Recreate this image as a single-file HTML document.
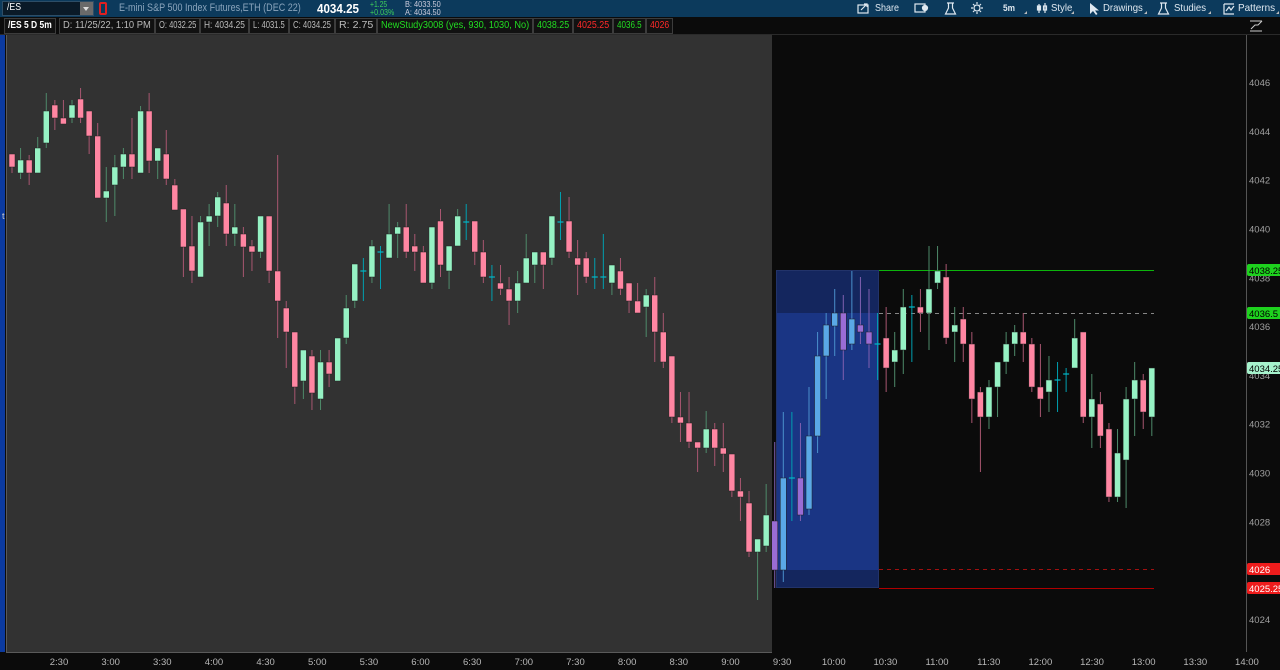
<!DOCTYPE html>
<html><head><meta charset="utf-8"><style>
*{margin:0;padding:0;box-sizing:border-box}
body{width:1280px;height:670px;overflow:hidden;background:#0b0b0b;font-family:"Liberation Sans",sans-serif;position:relative}
.top{position:absolute;left:0;top:0;width:1280px;height:17px;background:#0c3a5c;color:#dfe8f0;font-size:10px}
.t{position:absolute;white-space:nowrap;transform-origin:0 0}
.row2{position:absolute;left:0;top:17px;width:1280px;height:18px;background:#0b0b0b;border-bottom:1px solid #2a2a2a}
.seg{position:absolute;top:1px;height:16px;border:1px solid #3c3c3c;background:#111;overflow:hidden}
svg{position:absolute;left:0;top:0}
</style></head><body>
<div class="top" id="topbar">
 <div style="position:absolute;left:2px;top:1px;width:92px;height:15px;background:#0a1a28;border:1px solid #2d4d66"></div>
 <div style="position:absolute;left:80px;top:2px;width:13px;height:13px;background:#6a6a6a"></div>
 <div style="position:absolute;left:83px;top:7px;border-left:3.5px solid transparent;border-right:3.5px solid transparent;border-top:4px solid #ddd"></div>
 <div style="position:absolute;left:99px;top:2px;width:8px;height:13px;border:2px solid #e02020;border-radius:2px"></div>
</div>
<svg width="1280" height="17" style="top:0">
 <g stroke="#dfe8f0" fill="none" stroke-width="1.2">
  <rect x="858" y="5" width="10" height="8"/><path d="M861 10 L867 4 M864 4 H867 V7"/>
  <rect x="915" y="4" width="10" height="8"/><circle cx="925" cy="8" r="2.5" fill="#dfe8f0"/>
  <path d="M947 3 H954 M948.5 3 V8 L945.5 14 H955.5 L952.5 8 V3"/>
  <circle cx="977" cy="8" r="3"/><path d="M977 2 V4 M977 12 V14 M971 8 H973 M981 8 H983 M973 4 L974.5 5.5 M981 4 L979.5 5.5 M973 12 L974.5 10.5 M981 12 L979.5 10.5"/>
  <path d="M1039 4 V13 M1045 3 V13"/><rect x="1037.5" y="6" width="3" height="4" fill="#dfe8f0"/><rect x="1043.5" y="6" width="3" height="4"/>
  <path d="M1160 3 H1167 M1161.5 3 V8 L1158.5 14 H1168.5 L1165.5 8 V3"/>
  <path d="M1224 4 H1234 M1224 4 V14 H1234 M1226 11 L1229 7 L1231 10 L1234 6"/>
 </g>
 <path d="M1090 3 L1090 14 L1093 11 L1096 15 L1097.5 14 L1095 10.5 L1099 10.5 Z" fill="#dfe8f0"/>
 <g fill="#bbb"><path d="M1024 14 l3 0 0 -3z M1071 14 l3 0 0 -3z M1144 14 l3 0 0 -3z M1208 14 l3 0 0 -3z M1276 14 l3 0 0 -3z"/></g>
</svg>
<div class="row2" id="r2"></div>
<svg id="ch" width="1280" height="670"></svg>
<script>
(function(){
function fit(parent,txt,x,y,w,css){var d=document.createElement('div');d.className='t';d.textContent=txt;d.style.cssText+=css;d.style.left=x+'px';d.style.top=y+'px';parent.appendChild(d);var sw=d.scrollWidth;if(sw>0)d.style.transform='scaleX('+(w/sw)+')';return d;}
var tb=document.getElementById('topbar');
fit(tb,'/ES',7,2,14,'color:#fff;font-size:10px');
fit(tb,'E-mini S&P 500 Index Futures,ETH (DEC 22)',119,2,182,'color:#8aa4bc;font-size:11px');
fit(tb,'4034.25',317,1,42,'color:#fff;font-weight:bold;font-size:13px');
fit(tb,'+1.25',370,0,17,'color:#3ecf5a;font-size:8px');
fit(tb,'+0.03%',370,8,24,'color:#3ecf5a;font-size:8px');
fit(tb,'B: 4033.50',405,0,36,'color:#ccd;font-size:8px');
fit(tb,'A: 4034.50',405,8,36,'color:#ccd;font-size:8px');
fit(tb,'Share',875,2,24,'color:#dfe8f0;font-size:10.5px');
fit(tb,'5m',1003,3,12,'color:#dfe8f0;font-size:9px;font-weight:bold');
fit(tb,'Style',1051,2,21,'color:#dfe8f0;font-size:10.5px');
fit(tb,'Drawings',1103,2,40,'color:#dfe8f0;font-size:10.5px');
fit(tb,'Studies',1174,2,32,'color:#dfe8f0;font-size:10.5px');
fit(tb,'Patterns',1238,2,37,'color:#dfe8f0;font-size:10.5px');
var r=document.getElementById('r2');
var segs=[[4,56,'/ES 5 D 5m','#fff',1],[59,155,'D: 11/25/22, 1:10 PM','#bbb'],[155,200,'O: 4032.25','#bbb'],[200,249,'H: 4034.25','#bbb'],[249,289,'L: 4031.5','#bbb'],[289,335,'C: 4034.25','#bbb'],[335,377,'R: 2.75','#bbb'],[377,533,'NewStudy3008 (yes, 930, 1030, No)','#22dd22'],[533,573,'4038.25','#22dd22'],[573,613,'4025.25','#ff2a2a'],[613,646,'4036.5','#22dd22'],[646,673,'4026','#ff2a2a']];
segs.forEach(function(sg){var d=document.createElement('div');d.className='seg';d.style.left=sg[0]+'px';d.style.width=(sg[1]-sg[0])+'px';r.appendChild(d);
  fit(d,sg[2],3,1,sg[1]-sg[0]-8,'color:'+sg[3]+';font-size:10px;'+(sg[4]?'font-weight:bold;':''));});
var C=[[154,167,154,173],[173,160,148,179],[160,173,155,185],[173,148,137,173],[143,111,93,148],[105,118,100,130],[118,124,100,124],[118,105,100,123],[99,118,88,123],[111,136,111,154],[136,198,123,198],[198,191,167,222],[185,167,155,216],[167,154,148,179],[154,167,118,179],[173,111,106,173],[111,161,93,173],[161,148,148,179],[154,179,130,185],[185,210,179,210],[209,247,209,277],[246,271,216,283],[277,222,216,277],[222,216,204,246],[216,197,192,227],[203,234,185,246],[234,227,204,246],[234,247,227,277],[246,252,240,271],[252,216,216,258],[216,271,216,283],[271,301,155,338],[308,332,301,368],[332,387,332,404],[381,350,350,399],[356,393,350,410],[399,362,350,410],[362,374,350,387],[381,338,338,381],[338,308,295,344],[301,264,264,308],[271,271,258,301],[277,246,240,283],[252,252,246,289],[258,234,204,258],[234,227,222,258],
[227,252,204,258],[246,252,234,271],[252,283,246,283],[283,227,227,289],[221,265,209,277],[271,246,246,289],[246,216,209,246],[222,222,204,240],[221,252,221,265],[252,277,240,283],[277,277,265,301],[283,289,265,295],[289,301,277,325],[301,283,271,313],[283,258,234,283],[265,252,252,283],[252,265,252,289],[258,216,216,265],[222,222,192,240],[221,252,197,258],[258,265,240,295],[258,277,252,283],[277,277,258,289],[277,277,234,289],[283,265,265,295],[271,289,258,295],[283,301,283,313],[301,313,283,313],[307,295,289,337],[295,332,277,362],[332,362,313,368],[356,417,356,423],[417,423,392,442],[423,442,392,448],[442,448,442,472],[448,429,411,453],[429,448,423,466],[448,454,423,472],[454,491,454,497],[491,497,478,521],[503,552,491,557],[552,539,539,600],[546,515,484,552],
[521,570,442,588],[570,478,412,582],[478,478,412,521],[478,515,423,521],[509,436,387,515],[436,356,332,453],[356,325,313,399],[326,313,289,356],[313,350,295,380],[344,319,271,350],[325,332,277,344],[332,344,289,368],[344,344,313,380],
[338,368,307,392],[362,350,332,387],[350,307,289,374],[307,307,295,362],[307,313,289,332],[313,289,246,350],[283,271,246,289],[277,338,264,344],[332,325,307,362],[319,344,307,362],[344,399,332,423],[392,417,387,472],[417,387,380,429],[387,362,362,417],[362,344,332,374],[344,332,325,356],[332,344,313,362],[344,387,338,392],[387,399,344,417],[392,380,356,412],[380,380,362,412],[374,374,368,392],[368,338,319,368],[332,417,332,423],[417,399,374,448],[404,436,392,448],[429,497,423,502],[497,453,429,502],[460,399,387,508],[399,380,362,436],[380,412,374,429],[417,368,368,436]];
var s='';
s+='<rect x="0" y="35" width="5" height="617" fill="#0b3aa0"/>';
s+='<rect x="6" y="35" width="766" height="617" fill="#323232"/>';
s+='<path d="M6.5 35 V652.5 H772" stroke="#5a5a5a" fill="none"/>';
s+='<text x="2" y="219" fill="#ccc" font-size="9">t</text>';
s+='<rect x="776" y="270" width="103" height="318" fill="#14265e"/>';
s+='<rect x="776" y="313" width="103" height="257" fill="#1a3584"/>';
s+='<rect x="776.5" y="270.5" width="102" height="317" fill="none" stroke="#22336a"/>';
s+='<line x1="879" y1="270.5" x2="1154" y2="270.5" stroke="#0cb40c"/>';
s+='<line x1="879" y1="313.5" x2="1154" y2="313.5" stroke="#bbbbbb" stroke-dasharray="4,4" opacity=".7"/>';
s+='<line x1="879" y1="569.5" x2="1154" y2="569.5" stroke="#a01010" stroke-dasharray="4,4"/>';
s+='<line x1="879" y1="588.5" x2="1154" y2="588.5" stroke="#b00000"/>';
C.forEach(function(c,i){
 var x=12+i*8.57, o=c[0],cl=c[1],h=c[2],l=c[3];
 var inBox=i>=89&&i<=100;
 var doji=Math.abs(o-cl)<1;
 var up=cl<o;
 var body,wick;
 if(doji){body='#00b8c8';wick='#00a0b0';}
 else if(inBox){body=up?'#5aa8e6':'#9a6cd4';wick=up?'#4a90cc':'#8060b0';}
 else{body=up?'#96f2c4':'#ff86a2';wick=up?'#4e8a6a':'#a85670';}
 s+='<line x1="'+x+'" y1="'+h+'" x2="'+x+'" y2="'+l+'" stroke="'+wick+'" stroke-width="1"/>';
 if(doji) s+='<line x1="'+(x-3)+'" y1="'+o+'" x2="'+(x+3)+'" y2="'+o+'" stroke="'+body+'" stroke-width="1.2"/>';
 else s+='<rect x="'+(x-3)+'" y="'+Math.min(o,cl)+'" width="6" height="'+Math.max(1,Math.abs(o-cl))+'" fill="'+body+'" stroke="#202020" stroke-width=".5"/>';
});
s+='<line x1="1246.5" y1="35" x2="1246.5" y2="652" stroke="#555"/>';
for(var k=0;k<12;k++){var p=4046-2*k;var y=82+(4046-p)*24.41;s+='<text x="1249" y="'+(y+4)+'" fill="#a0a0a0" font-size="9.5">'+p+'</text>';}
function lab(y,t,bg,fg){s+='<rect x="1247" y="'+(y-6)+'" width="36" height="12" rx="2" fill="'+bg+'"/><text x="1249" y="'+(y+4)+'" fill="'+fg+'" font-size="9.5">'+t+'</text>';}
lab(270,'4038.25','#1ed21e','#000');lab(313,'4036.5','#1ed21e','#000');lab(368,'4034.25','#a6f2cc','#000');lab(569,'4026','#ee1c1c','#fff');lab(588,'4025.25','#ee1c1c','#fff');
s+='<path d="M1250 31 H1262 M1251 29 L1255 25 L1258 25 L1262 21 M1250 21 H1262" stroke="#ccc" fill="none"/>';
var T=['2:30','3:00','3:30','4:00','4:30','5:00','5:30','6:00','6:30','7:00','7:30','8:00','8:30','9:00','9:30','10:00','10:30','11:00','11:30','12:00','12:30','13:00','13:30','14:00'];
T.forEach(function(t,i){var x=59+i*51.65;s+='<text x="'+x+'" y="665" fill="#b8b8b8" font-size="9.5" text-anchor="middle">'+t+'</text>';});
document.getElementById('ch').innerHTML=s;
})();
</script>
</body></html>
